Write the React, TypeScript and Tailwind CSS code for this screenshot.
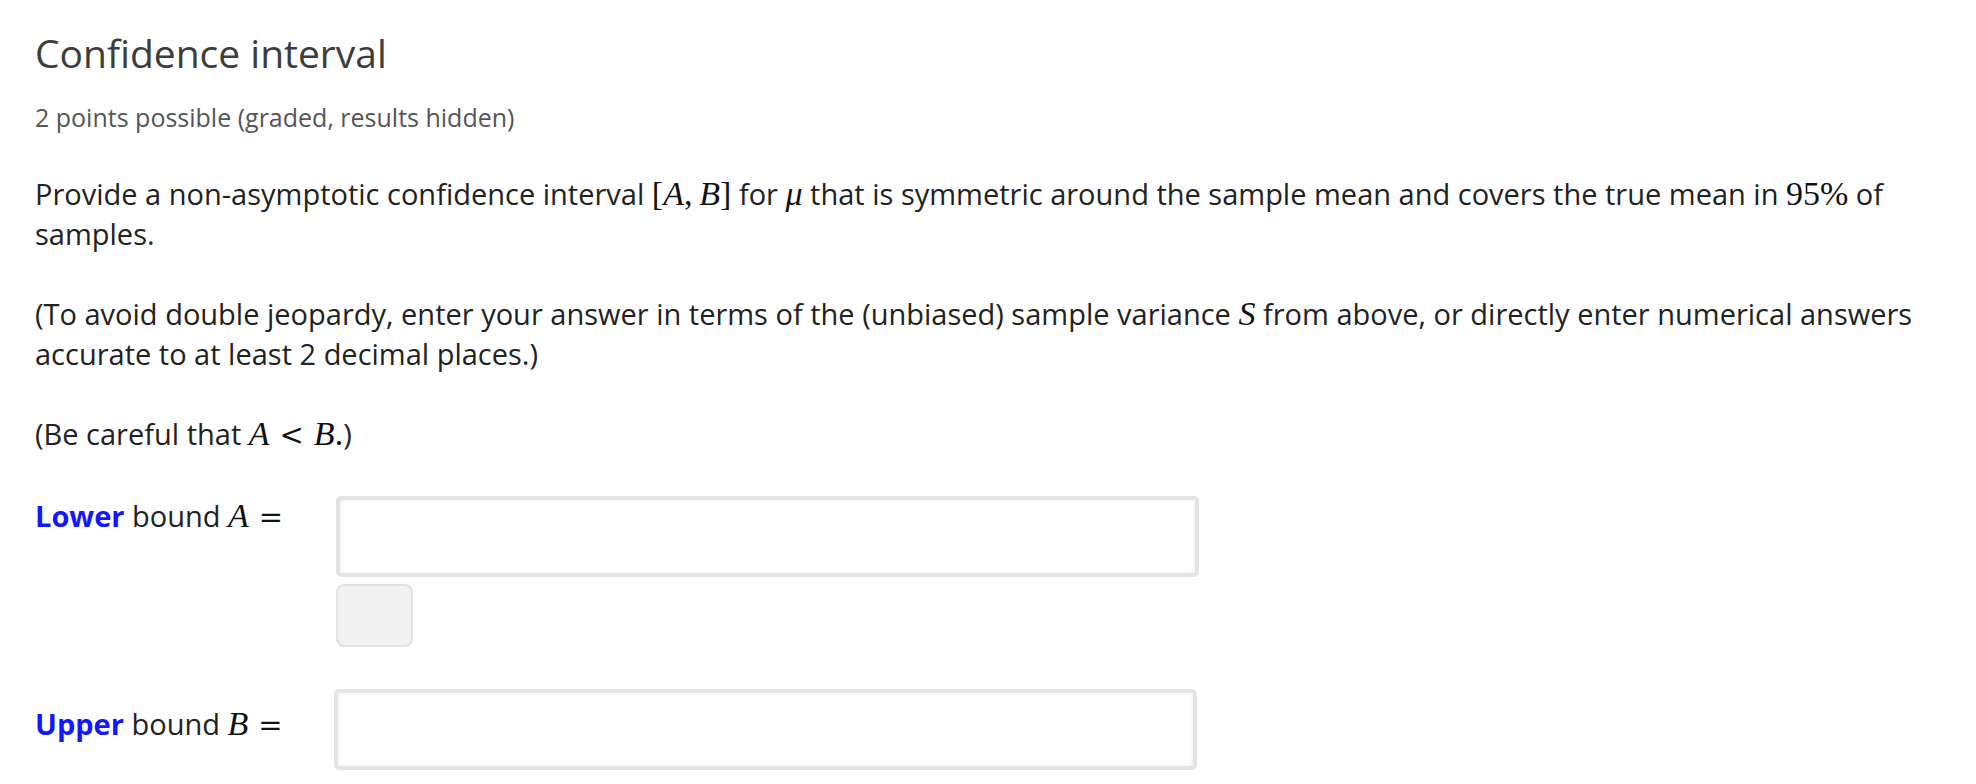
import React from "react";

const serif = "font-['Liberation_Serif','DejaVu_Serif',serif] text-[34px] leading-none text-[#111]";

const M = ({ children }: { children: React.ReactNode }) => (
  <span className={`${serif} not-italic`}>{children}</span>
);

const I = ({ children }: { children: React.ReactNode }) => <i className="italic">{children}</i>;

const Rel = ({ children }: { children: React.ReactNode }) => (
  <span className="mx-[10px] font-['DejaVu_Serif',serif] text-[29px] leading-none text-[#111]">{children}</span>
);

const AnswerInput = () => (
  <div className="w-[863px] h-[81px] rounded-[5px] border-[4px] border-[#e4e4e4] bg-white shadow-[inset_0_0_4px_rgba(0,0,0,0.08)]" />
);

export default function App() {
  return (
    <div className="min-h-screen bg-white pl-[35px] pr-[38px] font-['Open_Sans','Noto_Sans',sans-serif] text-[#222]">
      <h3 className="pt-[30px] text-[39px] leading-[46px] font-normal text-[#3d3d3d]">Confidence interval</h3>

      <div className="mt-[26px] text-[25px] leading-[30px] text-[#555]">2 points possible (graded, results hidden)</div>

      <div className="mt-[42px] text-[29px] leading-[40px]">
        <p>
          Provide a non-asymptotic confidence interval{" "}
          <M>
            [<I>A</I>,&thinsp;<I>B</I>]
          </M>{" "}
          for{" "}
          <M>
            <I>μ</I>
          </M>{" "}
          that is symmetric around the sample mean and covers the true mean in <M>95%</M> of samples.
        </p>

        <p className="mt-[40px]">
          (To avoid double jeopardy, enter your answer in terms of the (unbiased) sample variance{" "}
          <M>
            <I>S</I>
          </M>{" "}
          from above, or directly enter numerical answers accurate to at least 2 decimal places.)
        </p>

        <p className="mt-[40px]">
          (Be careful that{" "}
          <M>
            <I>A</I>
          </M>
          <Rel>&lt;</Rel>
          <M>
            <I>B</I>.
          </M>
          )
        </p>

        <div className="mt-[42px] flex">
          <div className="w-[301px] shrink-0">
            <span className="font-bold text-[#1515ff]">Lower</span> bound{" "}
            <M>
              <I>A</I>
            </M>
            <Rel>=</Rel>
          </div>
          <div className="flex flex-col gap-[7px]">
            <AnswerInput />
            <div className="w-[77px] h-[63px] rounded-[8px] border-[2px] border-[#e2e2e2] bg-[#f1f1f1]" />
          </div>
        </div>

        <div className="mt-[42px] flex">
          <div className="w-[299px] shrink-0 pt-[15px]">
            <span className="font-bold text-[#1515ff]">Upper</span> bound{" "}
            <M>
              <I>B</I>
            </M>
            <Rel>=</Rel>
          </div>
          <AnswerInput />
        </div>
      </div>
    </div>
  );
}
